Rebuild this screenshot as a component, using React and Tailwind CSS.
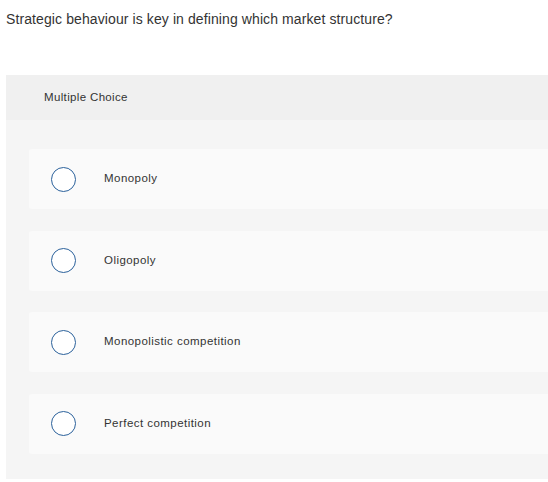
import React from "react";

const options = [
  "Monopoly",
  "Oligopoly",
  "Monopolistic competition",
  "Perfect competition",
];

const App = () => {
  return (
    <div className="w-[548px] h-[482px] bg-white text-[#333] font-['Liberation_Sans',Arial,sans-serif]">
      <p className="pt-[11px] pl-[6px] text-[14px] leading-[17px] tracking-[0.1px]">
        Strategic behaviour is key in defining which market structure?
      </p>
      <div className="ml-[6px] mt-[47px] h-[404px] bg-[#f5f5f5]">
        <div className="h-[45px] bg-[#f0f0f0] flex items-center pl-[38px] text-[11.5px] tracking-[0.35px]">
          Multiple Choice
        </div>
        <div className="pt-[29px] pl-[23px] flex flex-col gap-[21.5px]">
          {options.map((opt, i) => (
            <div
              key={i}
              className="h-[60px] bg-[#fafafa] rounded-l-[3px] flex items-center"
            >
              <span className="ml-[22px] w-[25px] h-[25px] rounded-full border-[1.5px] border-[#2b619b] bg-white" />
              <span className="ml-[28px] text-[11.5px] tracking-[0.45px]">{opt}</span>
            </div>
          ))}
        </div>
      </div>
    </div>
  );
};

export default App;
